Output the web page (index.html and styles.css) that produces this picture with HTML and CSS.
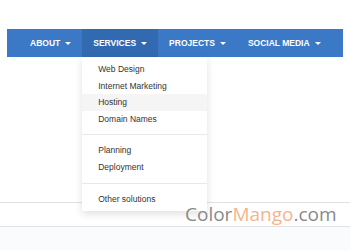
FILE: index.html
```html
<!DOCTYPE html>
<html lang="en">
<head>
    <meta charset="UTF-8">
    <meta name="viewport" content="width=device-width, initial-scale=1.0">
    <title>Dropdown Menu</title>
    <link rel="stylesheet" href="styles.css">
</head>
<body>
    <div class="page">
        <nav class="navbar">
            <ul class="nav-list">
                <li class="nav-item"><a href="#">About <span class="caret"></span></a></li>
                <li class="nav-item active">
                    <a href="#">Services <span class="caret"></span></a>
                    <ul class="dropdown">
                        <li><a href="#">Web Design</a></li>
                        <li><a href="#">Internet Marketing</a></li>
                        <li class="hover"><a href="#">Hosting</a></li>
                        <li><a href="#">Domain Names</a></li>
                        <li class="divider"></li>
                        <li><a href="#">Planning</a></li>
                        <li><a href="#">Deployment</a></li>
                        <li class="divider"></li>
                        <li><a href="#">Other solutions</a></li>
                    </ul>
                </li>
                <li class="nav-item"><a href="#">Projects <span class="caret"></span></a></li>
                <li class="nav-item"><a href="#">Social Media <span class="caret"></span></a></li>
            </ul>
        </nav>
    </div>

    <div class="footer-band"></div>
    <div class="footer-rest"></div>

    <div class="watermark">Color<span class="mango">Mango</span>.com</div>
</body>
</html>
```

FILE: styles.css
```css
* {
    margin: 0;
    padding: 0;
    box-sizing: border-box;
}

body {
    font-family: "Liberation Sans", Arial, sans-serif;
    background-color: #fff;
    width: 350px;
    height: 250px;
    overflow: hidden;
    position: relative;
}

.page {
    padding: 29px 7px 0;
    height: 202px;
}

.navbar {
    background: #3b79c6;
    height: 28px;
    padding-left: 12px;
}

.nav-list {
    list-style: none;
    display: flex;
    height: 100%;
}

.nav-item {
    position: relative;
}

.nav-item > a {
    display: flex;
    align-items: center;
    height: 28px;
    padding: 0 11px;
    color: #fff;
    font-size: 8.5px;
    font-weight: bold;
    text-transform: uppercase;
    text-decoration: none;
}

.nav-item.active > a {
    background: #326ab1;
}

.caret {
    display: inline-block;
    width: 0;
    height: 0;
    margin-left: 5px;
    border-left: 3px solid transparent;
    border-right: 3px solid transparent;
    border-top: 3px solid #fff;
}

.dropdown {
    position: absolute;
    top: 28px;
    left: 0;
    width: 125px;
    list-style: none;
    background: #fff;
    padding: 4px 0;
    box-shadow: 0 3px 8px rgba(0, 0, 0, 0.12);
    z-index: 2;
}

.dropdown a {
    display: block;
    padding: 0 16px;
    line-height: 16.6px;
    font-size: 8.5px;
    color: #333;
    text-decoration: none;
}

.dropdown .hover a {
    background: #f5f5f5;
}

.dropdown .divider {
    height: 1px;
    margin: 7px 0;
    background: #e8e8e8;
}

.footer-band {
    height: 25px;
    border-top: 1px solid #e2e2e2;
    border-bottom: 1px solid #e2e2e2;
}

.footer-rest {
    height: 23px;
    background: #fafbfc;
}

.watermark {
    position: absolute;
    left: 185px;
    top: 201px;
    font-family: "Open Sans", sans-serif;
    font-size: 19px;
    color: #8a8a8a;
    z-index: 3;
}

.mango {
    color: #f6b48c;
}
```
